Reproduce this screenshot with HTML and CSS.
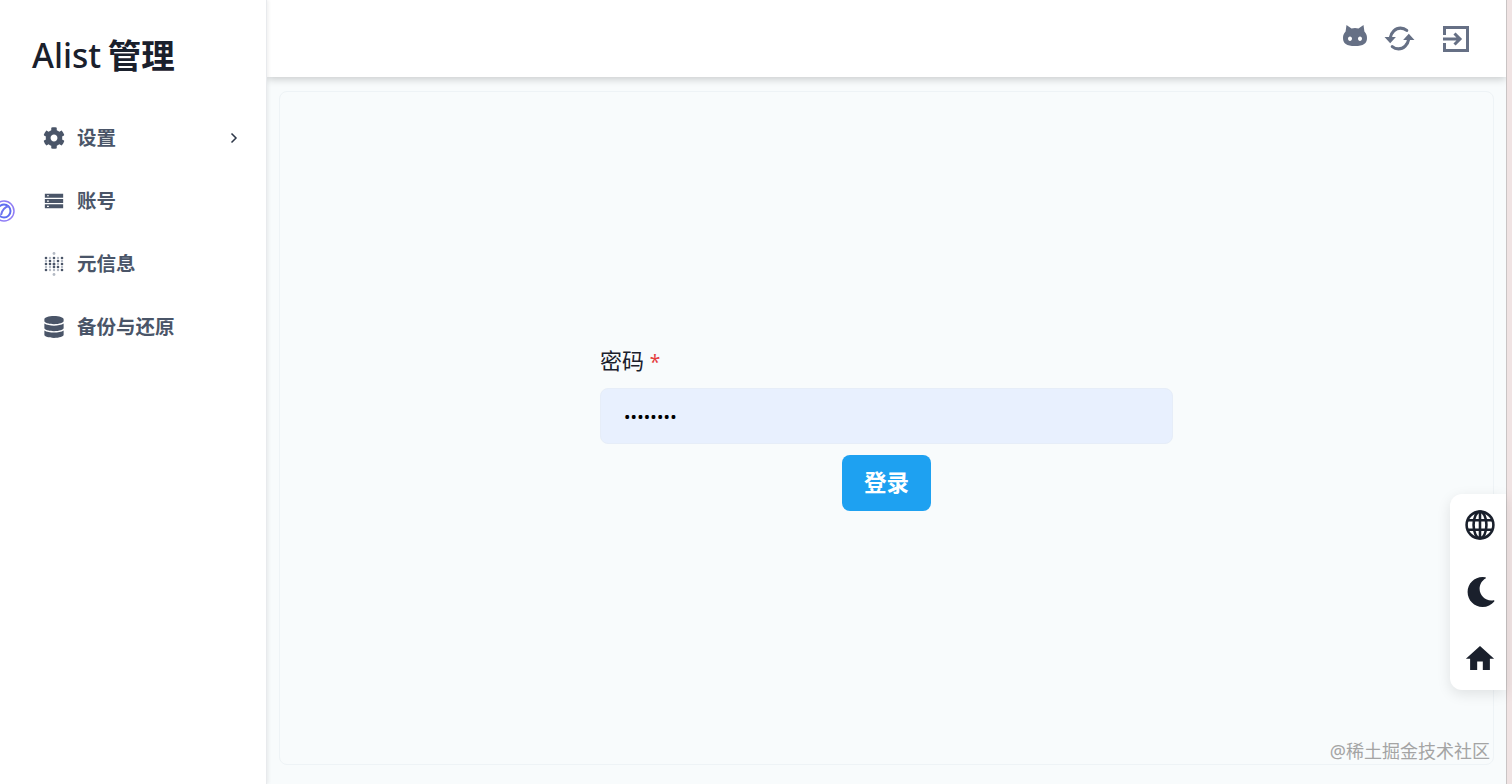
FILE: index.html
```html
<!DOCTYPE html>
<html lang="zh">
<head>
<meta charset="utf-8">
<title>Alist 管理</title>
<link rel="stylesheet" href="styles.css">
</head>
<body>
<div class="page">
  <aside class="sidebar">
    <h1 class="logo">Alist <span class="logo-cjk">管理</span></h1>
    <nav class="menu">
      <a class="item">
        <svg class="icon" viewBox="0 0 512 512"><path d="M487.4 315.7l-42.6-24.6c4.3-23.2 4.3-47 0-70.2l42.6-24.6c4.9-2.8 7.1-8.6 5.5-14-11.1-35.6-30-67.8-54.7-94.6-3.8-4.1-10-5.1-14.8-2.3L380.8 110c-17.9-15.4-38.5-27.3-60.8-35.1V25.8c0-5.6-3.9-10.5-9.4-11.7-36.7-8.2-74.3-7.8-109.2 0-5.5 1.2-9.4 6.1-9.4 11.7V75c-22.2 7.9-42.8 19.8-60.8 35.1L88.7 85.5c-4.9-2.8-11-1.9-14.8 2.3-24.7 26.7-43.6 58.9-54.7 94.6-1.7 5.4.6 11.2 5.5 14L67.3 221c-4.3 23.2-4.3 47 0 70.2l-42.6 24.6c-4.9 2.8-7.1 8.6-5.5 14 11.1 35.6 30 67.8 54.7 94.6 3.8 4.1 10 5.1 14.8 2.3l42.6-24.6c17.9 15.4 38.5 27.3 60.8 35.1v49.2c0 5.6 3.9 10.5 9.4 11.7 36.7 8.2 74.3 7.8 109.2 0 5.5-1.2 9.4-6.1 9.4-11.7v-49.2c22.2-7.9 42.8-19.8 60.8-35.1l42.6 24.6c4.9 2.8 11 1.9 14.8-2.3 24.7-26.7 43.6-58.9 54.7-94.6 1.5-5.5-.7-11.3-5.6-14.1zM256 336c-44.1 0-80-35.9-80-80s35.9-80 80-80 80 35.9 80 80-35.9 80-80 80z"/></svg>
        <span class="label">设置</span>
        <svg class="chevron" viewBox="0 0 10 14"><path d="M2.5 2.5 7 7l-4.500 4.500"/></svg>
      </a>
      <a class="item">
        <svg class="icon" viewBox="-2 -3 24 22"><path fill-rule="evenodd" d="M0 0h20v4.400H0zM0 5.800h20v4.400H0zM0 11.600h20V16H0zM2.400 1.600h2v1.300h-2zM2.400 7.400h2v1.300h-2zM2.400 13.200h2v1.300h-2z"/></svg>
        <span class="label">账号</span>
      </a>
      <a class="item">
        <svg class="icon icon-dots" viewBox="0 0 20 24">
          <g class="dots-dark"><circle cx="2" cy="6" r="1.300"/><circle cx="2" cy="12" r="1.300"/><circle cx="2" cy="18" r="1.300"/><circle cx="6" cy="9" r="1.300"/><circle cx="6" cy="12" r="1.300"/><circle cx="10" cy="6" r="1.300"/><circle cx="10" cy="12" r="1.500"/><circle cx="10" cy="15" r="1.300"/><circle cx="14" cy="9" r="1.300"/><circle cx="14" cy="15" r="1.300"/><circle cx="18" cy="6" r="1.300"/><circle cx="18" cy="12" r="1.300"/><circle cx="18" cy="18" r="1.300"/></g>
          <g class="dots-light"><circle cx="10" cy="1.500" r="1.400"/><circle cx="10" cy="22.500" r="1.400"/><circle cx="2" cy="9" r="1.200"/><circle cx="2" cy="15" r="1.200"/><circle cx="6" cy="6" r="1.200"/><circle cx="6" cy="15" r="1.200"/><circle cx="6" cy="18" r="1.200"/><circle cx="10" cy="9" r="1.200"/><circle cx="10" cy="18" r="1.200"/><circle cx="14" cy="6" r="1.200"/><circle cx="14" cy="12" r="1.200"/><circle cx="14" cy="18" r="1.200"/><circle cx="18" cy="9" r="1.200"/><circle cx="18" cy="15" r="1.200"/></g>
        </svg>
        <span class="label">元信息</span>
      </a>
      <a class="item">
        <svg class="icon" viewBox="0 0 448 512"><path d="M448 73.143v45.714C448 159.143 347.667 192 224 192S0 159.143 0 118.857V73.143C0 32.857 100.333 0 224 0s224 32.857 224 73.143zM448 176v102.857C448 319.143 347.667 352 224 352S0 319.143 0 278.857V176c48.125 33.143 136.208 48.572 224 48.572S399.874 209.143 448 176zm0 160v102.857C448 479.143 347.667 512 224 512S0 479.143 0 438.857V336c48.125 33.143 136.208 48.572 224 48.572S399.875 369.143 448 336z"/></svg>
        <span class="label">备份与还原</span>
      </a>
    </nav>
  </aside>
  <div class="column">
    <header class="topbar">
      <svg class="tool tool-cat" viewBox="0 0 24 21"><path fill-rule="evenodd" d="M3.500 0 8.500 3.500a15 15 0 0 1 7 0l5-3.500.9 6.500C23.200 8.400 24 10.300 24 13c0 5.500-3.500 8-12 8S0 18.500 0 13c0-2.700.8-4.600 2.600-6.500zM7 11.500c-1.200 0-2 1-2 2.200s.8 2.200 2 2.200 2-1 2-2.200-.8-2.200-2-2.200zm10 0c-1.200 0-2 1-2 2.200s.8 2.200 2 2.200 2-1 2-2.200-.8-2.200-2-2.200z"/></svg>
      <svg class="tool tool-sync" viewBox="0 0 30 24"><path class="sync-arc" d="M6 11.500C7 6 11 2 16 2c2.500 0 4.500.9 6 2.200M24 12.500c-1 5.500-5 9.500-10 9.500-2.500 0-4.500-.9-6-2.200"/><path class="sync-head" d="M0.500 10.500h11L6 16.500zM18.500 13.500h11L24 7.500z"/></svg>
      <svg class="tool tool-exit" viewBox="0 0 26 26"><path class="exit-line" d="M1.500 9V1.500h23v23h-23V17M0 13h17M11.500 7.500 17 13l-5.500 5.500"/></svg>
    </header>
    <main class="content">
      <div class="board">
        <form class="login">
          <div class="field-label">密码 <span class="required">*</span></div>
          <div class="input">••••••••</div>
          <button class="submit" type="button">登录</button>
        </form>
      </div>
    </main>
  </div>
  <div class="edge"></div>
</div>
<svg class="swirl" viewBox="0 0 15 26"><circle class="swirl-outer" cx="4" cy="13" r="10"/><circle class="swirl-inner" cx="4" cy="13" r="6.500"/><path class="swirl-hook" d="M9 8c-4 1-7 4-8 9"/></svg>
<div class="float-panel">
  <svg class="float-icon" viewBox="0 0 28 28"><g class="globe"><circle cx="14" cy="14" r="12.500"/><ellipse cx="14" cy="14" rx="6" ry="12.500"/><path d="M14 1.500v25M2.500 9.500h23M2.500 18.500h23"/></g></svg>
  <svg class="float-icon moon" viewBox="0 0 512 512"><path d="M283.211 512c78.962 0 151.079-35.925 198.857-94.792 7.068-8.708-.639-21.43-11.562-19.35-124.203 23.654-238.262-71.576-238.262-196.954 0-72.222 38.662-138.635 101.498-174.394 9.686-5.512 7.250-20.197-3.756-22.230A258.156 258.156 0 0 0 283.211 0c-141.309 0-256 114.511-256 256 0 141.309 114.511 256 256 256z"/></svg>
  <svg class="float-icon home" viewBox="2 3 20 17"><path d="M10 20v-6h4v6h5v-8h3L12 3 2 12h3v8z"/></svg>
</div>
<div class="watermark">@稀土掘金技术社区</div>
</body>
</html>
```
FILE: styles.css
```css
* { box-sizing: border-box; }
html, body { margin: 0; height: 100%; overflow: hidden; }
body {
  position: relative;
  font-family: "Noto Sans", "Noto Sans CJK SC", sans-serif;
  color: #1a202c;
  background: #fff;
}
.page { display: flex; height: 784px; }

.sidebar {
  width: 267px;
  flex: none;
  background: #fff;
  border-right: 1px solid #e8eaed;
  box-shadow: 1px 0 4px rgba(0, 0, 0, .08);
  padding: 32px 0 0 32px;
  position: relative;
  z-index: 2;
}
.logo {
  margin: 0 0 36px;
  font-size: 33.500px;
  line-height: 46px;
  font-weight: 500;
  word-spacing: -2px;
  color: #1a202c;
}
.logo-cjk { font-weight: 700; }
.menu { display: flex; flex-direction: column; gap: 15px; padding-left: 11px; }
.item { display: flex; align-items: center; height: 48px; color: #4a5568; }
.icon { width: 22px; height: 22px; fill: #4a5568; flex: none; margin-right: 12px; }
.icon-dots { width: 20px; height: 24px; margin: 0 13px 0 1px; }
.label { font-size: 19.500px; font-weight: 700; line-height: 28px; }
.chevron { width: 10px; height: 14px; margin-left: auto; margin-right: 27px; fill: none; stroke: #2d3748; stroke-width: 1.500; }
.dots-dark { fill: #4a5568; }
.dots-light { fill: #b4bac4; }

.column { flex: 1; min-width: 0; display: flex; flex-direction: column; }
.topbar {
  height: 77px;
  flex: none;
  background: #fff;
  box-shadow: 0 2px 8px rgba(0, 0, 0, .2);
  display: flex;
  align-items: flex-start;
  justify-content: flex-end;
  position: relative;
  z-index: 1;
}
.tool { fill: #667085; flex: none; }
.tool-cat { width: 24px; height: 21px; margin-top: 25px; }
.tool-sync { width: 31px; height: 25px; margin: 26px 0 0 17px; }
.sync-arc { fill: none; stroke: #667085; stroke-width: 3; stroke-linecap: round; }
.sync-head { fill: #667085; }
.tool-exit { width: 26px; height: 26px; margin: 26px 37px 0 28px; }
.exit-line { fill: none; stroke: #667085; stroke-width: 3; }

.content { flex: 1; min-height: 0; background: #f8fbfc; padding: 14px 12px 19px; }
.board {
  height: 100%;
  border: 1px solid #eef3f6;
  border-radius: 8px;
  display: flex;
  align-items: center;
  justify-content: center;
}
.login { width: 573px; display: flex; flex-direction: column; align-items: center; margin-bottom: 2px; }
.field-label { align-self: flex-start; font-size: 22px; line-height: 33px; margin-bottom: 9px; color: #1a202c; }
.required { color: #e53e3e; font-size: 19px; }
.input {
  width: 100%;
  height: 56px;
  background: #e8f0fe;
  border: 1px solid #e6edf8;
  border-radius: 8px;
  padding: 0 23px;
  font-size: 17px;
  line-height: 56px;
  color: #000;
  letter-spacing: .2px;
}
.submit {
  margin-top: 11px;
  width: 89px;
  height: 56px;
  border: 0;
  border-radius: 8px;
  background: #1ea1f1;
  color: #fff;
  padding: 0 0 2px;
  font: 700 22.500px "Noto Sans", "Noto Sans CJK SC", sans-serif;
}

.edge { width: 6px; flex: none; background: #f0e3e3; border-left: 1px solid #c9c4c4; position: relative; z-index: 3; }

.swirl { position: absolute; left: 0; top: 198px; width: 15px; height: 26px; fill: none; z-index: 5; }
.swirl-outer { stroke: #8f7cf5; stroke-width: 1.500; }
.swirl-inner { stroke: #5f6df0; stroke-width: 2; }
.swirl-hook { stroke: #6f74ef; stroke-width: 2; }

.float-panel {
  position: absolute;
  right: 6px;
  top: 494px;
  width: 56px;
  height: 196px;
  background: #fff;
  border-radius: 12px 0 0 12px;
  box-shadow: 0 4px 14px rgba(0, 0, 0, .1);
  display: flex;
  flex-direction: column;
  align-items: flex-end;
  justify-content: space-between;
  padding: 16px 11px 20px 0;
  z-index: 4;
}
.float-icon { width: 30px; height: 30px; fill: #1a202c; }
.moon { margin: 2px -1px 0 0; }
.home { height: 24px; margin-top: 4px; }
.globe { fill: none; stroke: #1a202c; stroke-width: 2.400; }
.watermark {
  position: absolute;
  right: 22px;
  top: 739px;
  font-size: 18px;
  line-height: 24px;
  color: #a4a4a4;
  z-index: 5;
}
```
